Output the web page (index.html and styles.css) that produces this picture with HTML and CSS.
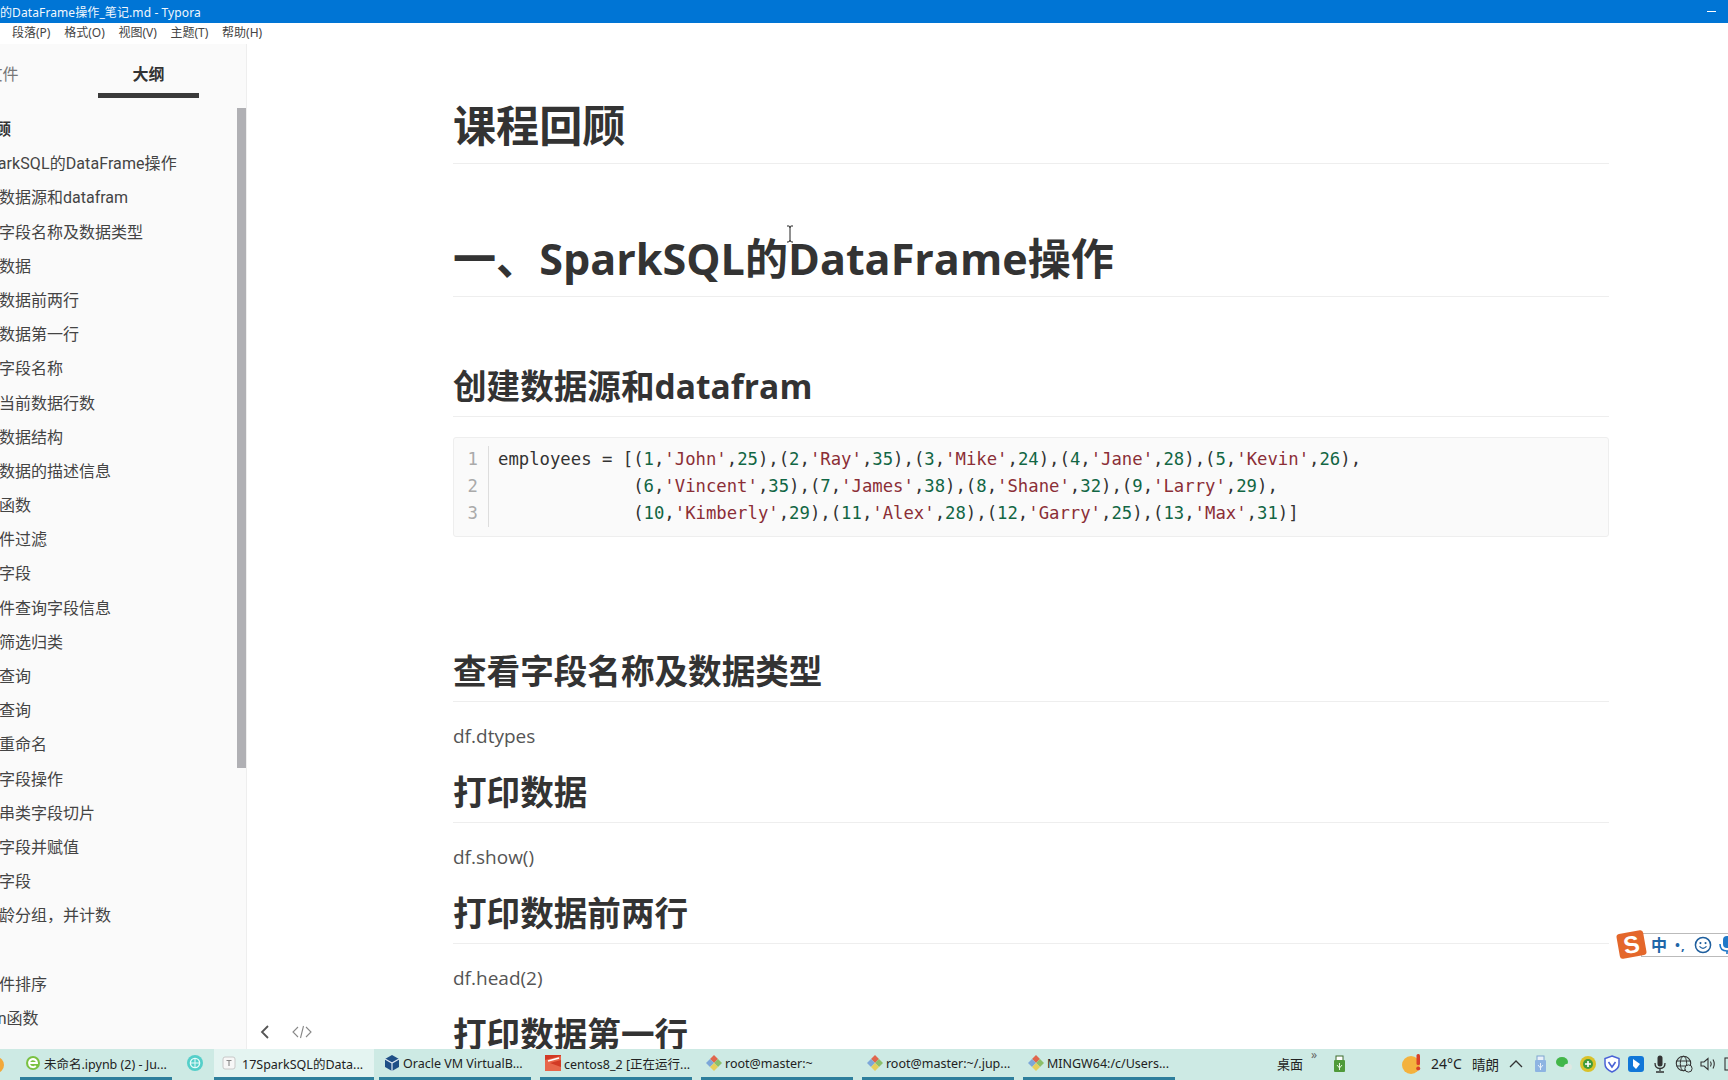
FILE: index.html
```html
<!DOCTYPE html>
<html lang="zh">
<head>
<meta charset="utf-8">
<title>Typora</title>
<link rel="stylesheet" href="styles.css">
</head>
<body>
<div class="app">
  <header class="titlebar">
    <span class="title">的DataFrame操作_笔记.md - Typora</span>
    <span class="minimize"></span>
  </header>
  <nav class="menubar">
    <span>段落(P)</span><span>格式(O)</span><span>视图(V)</span><span>主题(T)</span><span>帮助(H)</span>
  </nav>
  <div class="workspace">
    <aside class="sidebar">
      <div class="tabs">
        <span class="tab">文件</span>
        <span class="tab tab-active">大纲</span>
      </div>
      <ul class="outline">
        <li class="d1">课程回顾</li>
        <li class="d1 plain">一、SparkSQL的DataFrame操作</li>
        <li>创建数据源和datafram</li>
        <li>查看字段名称及数据类型</li>
        <li>打印数据</li>
        <li>打印数据前两行</li>
        <li>打印数据第一行</li>
        <li>查看字段名称</li>
        <li>查看当前数据行数</li>
        <li>查看数据结构</li>
        <li>查看数据的描述信息</li>
        <li>聚合函数</li>
        <li>按条件过滤</li>
        <li>选择字段</li>
        <li>按条件查询字段信息</li>
        <li>条件筛选归类</li>
        <li>模糊查询</li>
        <li>范围查询</li>
        <li>字段重命名</li>
        <li>新增字段操作</li>
        <li>字符串类字段切片</li>
        <li>新增字段并赋值</li>
        <li>删除字段</li>
        <li>按年龄分组，并计数</li>
        <li>排序</li>
        <li>按条件排序</li>
        <li>union函数</li>
      </ul>
      <div class="scrollbar"></div>
    </aside>
    <main class="doc">
      <h1 class="first">课程回顾</h1>
      <h1>一、SparkSQL的DataFrame操作</h1>
      <h2>创建数据源和datafram</h2>
      <div class="code">
        <div class="gutter"><span>1</span><span>2</span><span>3</span></div>
<pre class="lines">employees = [(<i>1</i>,<b>'John'</b>,<i>25</i>),(<i>2</i>,<b>'Ray'</b>,<i>35</i>),(<i>3</i>,<b>'Mike'</b>,<i>24</i>),(<i>4</i>,<b>'Jane'</b>,<i>28</i>),(<i>5</i>,<b>'Kevin'</b>,<i>26</i>),
             (<i>6</i>,<b>'Vincent'</b>,<i>35</i>),(<i>7</i>,<b>'James'</b>,<i>38</i>),(<i>8</i>,<b>'Shane'</b>,<i>32</i>),(<i>9</i>,<b>'Larry'</b>,<i>29</i>),
             (<i>10</i>,<b>'Kimberly'</b>,<i>29</i>),(<i>11</i>,<b>'Alex'</b>,<i>28</i>),(<i>12</i>,<b>'Garry'</b>,<i>25</i>),(<i>13</i>,<b>'Max'</b>,<i>31</i>)]</pre>
      </div>
      <h2 class="after-code">查看字段名称及数据类型</h2>
      <p>df.dtypes</p>
      <h2>打印数据</h2>
      <p>df.show()</p>
      <h2>打印数据前两行</h2>
      <p>df.head(2)</p>
      <h2>打印数据第一行</h2>
      <div class="footer-tools">
        <svg width="12" height="16" viewBox="0 0 12 16"><path d="M9 2 L3 8 L9 14" fill="none" stroke="#555" stroke-width="1.8"/></svg>
        <svg width="20" height="16" viewBox="0 0 20 16"><path d="M6 3 L1 8 L6 13 M14 3 L19 8 L14 13 M11.5 2 L8.5 14" fill="none" stroke="#888" stroke-width="1.1"/></svg>
      </div>
      <svg class="cursor" width="10" height="18" viewBox="0 0 10 18"><path d="M2 1 H4 Q5 1 5 3 V15 Q5 17 3 17 H2 M8 1 H6 Q5 1 5 3 M5 15 Q5 17 7 17 H8" fill="none" stroke="#222" stroke-width="1"/></svg>
    </main>
  </div>
  <footer class="taskbar">
    <svg class="edge-icon" width="18" height="20" viewBox="0 0 18 20"><circle cx="9" cy="10" r="8" fill="#f2a93b"/></svg>
    <div class="task t1">
      <svg width="16" height="16" viewBox="0 0 16 16"><circle cx="8" cy="8" r="7" fill="#7ac142"/><path d="M4 8 H12 A4 4 0 1 0 10.8 11" fill="none" stroke="#fff" stroke-width="2"/></svg>
      <span>未命名.ipynb (2) - Ju...</span>
    </div>
    <svg class="solo" width="18" height="18" viewBox="0 0 18 18"><circle cx="9" cy="9" r="8" fill="#54cfc9"/><circle cx="9" cy="9" r="4.6" fill="none" stroke="#e8fbfa" stroke-width="1.4"/><path d="M4.5 9 H13.5 M9 4.5 V13.5" stroke="#e8fbfa" stroke-width="1"/></svg>
    <div class="task t2 active">
      <svg width="14" height="14" viewBox="0 0 14 14"><rect x="1" y="1" width="12" height="12" rx="2" fill="#f7f7f7" stroke="#c8c8c8"/><path d="M4.5 4.5 H9.5 M7 4.5 V10" stroke="#888" stroke-width="1.1"/></svg>
      <span>17SparkSQL的Data...</span>
    </div>
    <div class="task">
      <svg width="16" height="18" viewBox="0 0 16 18"><path d="M8 1 L15 5 V13 L8 17 L1 13 V5 Z" fill="#1f4f86"/><path d="M1 5 L8 9 L15 5 M8 9 V17" stroke="#dfe9f2" stroke-width="1.2" fill="none"/></svg>
      <span>Oracle VM VirtualB...</span>
    </div>
    <div class="task">
      <svg width="16" height="16" viewBox="0 0 16 16"><rect width="16" height="16" fill="#d23a25"/><path d="M0 5 L16 1 V5 L5 8 L16 12 V16 H0 Z" fill="#e8664a"/><path d="M3 6 L14 3" stroke="#fff" stroke-width="1.4"/></svg>
      <span>centos8_2 [正在运行...</span>
    </div>
    <div class="task">
      <svg width="16" height="18" viewBox="0 0 16 18"><path d="M8 1 L12 5 L8 9 L4 5 Z" fill="#e0664d"/><path d="M4 5 L8 9 L4 13 L0 9 Z" fill="#7da7d9"/><path d="M12 5 L16 9 L12 13 L8 9 Z" fill="#8cbf6a"/><path d="M8 9 L12 13 L8 17 L4 13 Z" fill="#e6cf5c"/></svg>
      <span>root@master:~</span>
    </div>
    <div class="task">
      <svg width="16" height="18" viewBox="0 0 16 18"><path d="M8 1 L12 5 L8 9 L4 5 Z" fill="#e0664d"/><path d="M4 5 L8 9 L4 13 L0 9 Z" fill="#7da7d9"/><path d="M12 5 L16 9 L12 13 L8 9 Z" fill="#8cbf6a"/><path d="M8 9 L12 13 L8 17 L4 13 Z" fill="#e6cf5c"/></svg>
      <span>root@master:~/.jup...</span>
    </div>
    <div class="task">
      <svg width="16" height="18" viewBox="0 0 16 18"><path d="M8 1 L12 5 L8 9 L4 5 Z" fill="#e0664d"/><path d="M4 5 L8 9 L4 13 L0 9 Z" fill="#7da7d9"/><path d="M12 5 L16 9 L12 13 L8 9 Z" fill="#8cbf6a"/><path d="M8 9 L12 13 L8 17 L4 13 Z" fill="#e6cf5c"/></svg>
      <span>MINGW64:/c/Users...</span>
    </div>
    <div class="tray">
      <span class="desk">桌面</span>
      <span class="more">»</span>
      <svg class="tray-usb" width="13" height="18" viewBox="0 0 13 18"><rect x="3" y="1" width="7" height="5" fill="#fff" stroke="#3c6b2a"/><rect x="1" y="5" width="11" height="12" rx="1" fill="#4f9a3a"/><path d="M6.5 8 V15 M4 10 L6.5 13 L9 10" stroke="#e8f5e0" fill="none"/></svg>
      <svg class="weather" width="20" height="22" viewBox="0 0 20 22"><circle cx="9" cy="12" r="9" fill="#f4b23e"/><rect x="14.5" y="1" width="3.5" height="11" rx="1.5" fill="#d8402a"/><circle cx="16.2" cy="15.5" r="2" fill="#d8402a"/></svg>
      <span class="temp">24°C</span>
      <span class="sky">晴朗</span>
      <div class="icons">
        <svg width="18" height="18" viewBox="0 0 18 18"><path d="M3 12 L9 6 L15 12" fill="none" stroke="#333" stroke-width="1.3"/></svg>
        <svg width="18" height="18" viewBox="0 0 18 18"><rect x="6" y="1" width="7" height="5" fill="#e8f0fa" stroke="#7fa4d0"/><rect x="4" y="5" width="11" height="12" rx="1" fill="#8db4e2"/><path d="M9.5 8 V15 M7 10 L9.5 13 L12 10" stroke="#e8f0fa" fill="none"/></svg>
        <svg width="18" height="18" viewBox="0 0 18 18"><ellipse cx="7" cy="7" rx="6" ry="5" fill="#43b649"/><ellipse cx="13" cy="12" rx="4" ry="3.2" fill="#dfe8e2"/></svg>
        <svg width="18" height="18" viewBox="0 0 18 18"><circle cx="9" cy="9" r="8" fill="#d9c22a"/><circle cx="9" cy="9" r="5" fill="#3f9a3c"/><path d="M6 9 H12 M9 6 V12" stroke="#fff" stroke-width="1.6"/></svg>
        <svg width="18" height="18" viewBox="0 0 18 18"><path d="M9 1 L16 3.5 V9 Q16 14 9 17 Q2 14 2 9 V3.5 Z" fill="#fff" stroke="#4a63d6" stroke-width="1.5"/><path d="M5.5 7 L9 12 L12.5 7" fill="none" stroke="#4a63d6" stroke-width="1.6"/></svg>
        <svg width="18" height="18" viewBox="0 0 18 18"><rect x="1" y="1" width="16" height="16" rx="3" fill="#1177d8"/><path d="M6 4 L13 9 L9 14 L6 11 Z" fill="#fff"/></svg>
        <svg width="18" height="18" viewBox="0 0 18 18"><rect x="6.5" y="0.5" width="5" height="11" rx="2.5" fill="#333"/><path d="M4 8 Q4 13.5 9 13.5 Q14 13.5 14 8 M9 13.5 V16 M5 17 H13" fill="none" stroke="#333" stroke-width="1.3"/></svg>
        <svg width="18" height="18" viewBox="0 0 18 18"><circle cx="8.5" cy="8.5" r="7.2" fill="none" stroke="#333" stroke-width="1.1"/><ellipse cx="8.5" cy="8.5" rx="3.2" ry="7.2" fill="none" stroke="#333"/><path d="M1.5 6 H15.5 M1.5 11 H15.5" stroke="#333"/><circle cx="13.5" cy="13.5" r="3.6" fill="#cfeae5" stroke="#333"/></svg>
        <svg width="18" height="18" viewBox="0 0 18 18"><path d="M2 7 H5 L9 3.5 V14.5 L5 11 H2 Z" fill="none" stroke="#333" stroke-width="1.1"/><path d="M11.5 6.5 Q13 9 11.5 11.5 M14 4.5 Q16.5 9 14 13.5" fill="none" stroke="#333" stroke-width="1.1"/></svg>
        <svg width="18" height="18" viewBox="0 0 18 18"><rect x="2" y="3" width="14" height="12" fill="none" stroke="#333" stroke-width="1.1"/><path d="M5 7 H13 M5 11 H13" stroke="#333"/></svg>
      </div>
    </div>
  </footer>
  <div class="ime">
    <span class="ime-logo">S</span>
    <div class="ime-box">
      <span class="ime-zh">中</span>
      <span class="ime-punct">•,</span>
      <svg class="ime-smile" width="18" height="18" viewBox="0 0 19 19"><circle cx="9.5" cy="9.5" r="8" fill="none" stroke="#1f5f9e" stroke-width="1.6"/><circle cx="6.8" cy="7.5" r="1.1" fill="#1f5f9e"/><circle cx="12.2" cy="7.5" r="1.1" fill="#1f5f9e"/><path d="M5.8 11 Q9.5 15 13.2 11" fill="none" stroke="#1f5f9e" stroke-width="1.3"/></svg>
      <svg class="ime-mic" width="18" height="20" viewBox="0 0 18 20"><rect x="5" y="1" width="8" height="12" rx="4" fill="#1f78c8"/><path d="M2 9 Q2 16 9 16 Q16 16 16 9 M9 16 V19" fill="none" stroke="#1f78c8" stroke-width="1.6"/></svg>
    </div>
  </div>
</div>
</body>
</html>
```
FILE: styles.css
```css
* { box-sizing: border-box; }
html, body { margin: 0; padding: 0; height: 100%; overflow: hidden; background: #fff; }
body { font-family: "Open Sans", "Noto Sans CJK SC", sans-serif; color: #333; }
.app { position: relative; display: flex; flex-direction: column; width: 1728px; height: 1080px; overflow: hidden; }

.titlebar { flex: 0 0 23px; background: #0075d5; color: #f2f8fd; display: flex; align-items: center; justify-content: space-between; font-size: 12px; padding: 0 6px 0 0; white-space: nowrap; }
.title { font-family: "Noto Sans", "Noto Sans CJK SC", sans-serif; letter-spacing: 0.1px; }
.minimize { width: 9px; height: 1px; background: #fff; margin-right: 6px; margin-top: -1px; }

.menubar { flex: 0 0 21px; display: flex; align-items: flex-start; gap: 13.7px; padding-left: 12px; font-size: 12px; line-height: 20px; color: #444; background: #fff; font-family: "Noto Sans", "Noto Sans CJK SC", sans-serif; }

.workspace { flex: 1 1 auto; display: flex; min-height: 0; }

.sidebar { position: relative; flex: 0 0 247px; background: #fafafa; border-right: 1px solid #eee; overflow: hidden; }
.tabs { height: 54px; display: flex; margin-left: -48px; padding-left: 0; }
.tab { flex: 0 0 101px; margin-right: 45px; text-align: center; font-size: 16px; line-height: 60px; color: #777; height: 54px; white-space: nowrap; }
.tab-active { color: #333; font-weight: 700; border-bottom: 5px solid #3a3a3a; }
.outline { list-style: none; margin: 15px 0 0 -33px; padding: 0; font-family: "Roboto", "Noto Sans CJK SC", sans-serif; font-size: 16px; color: #444; }
.outline li { height: 34.2px; line-height: 34px; white-space: nowrap; }
.outline .d1 { margin-left: -20px; font-weight: 700; color: #333; }
.outline .plain { font-weight: 400; color: #444; letter-spacing: 0.08px; }
.scrollbar { position: absolute; top: 64px; right: 0; width: 9px; height: 660px; background: #b0b0b4; }

.doc { position: relative; flex: 1 1 auto; padding: 54px 119px 0 206px; background: #fff; overflow: hidden; min-width: 0; }
h1, h2 { margin: 19px 0 0; font-weight: 700; color: #333; border-bottom: 1px solid #eee; }
h1 { font-size: 43.1px; line-height: 56px; padding-bottom: 9px; margin-top: 67px; }
h1.first { margin-top: 0; }
h2 { font-size: 33.6px; line-height: 44px; padding-bottom: 8px; }
h1 + h2 { margin-top: 67px; }
h2.after-code { margin-top: 112px; }
.doc p { margin: 19px 0 0; font-size: 19px; line-height: 30px; color: #555; }

.code { display: flex; margin-top: 20px; height: 100px; padding: 8px 0 0; background: #fafafa; border: 1px solid #eee; border-radius: 3px; font-family: "DejaVu Sans Mono", monospace; font-size: 17.28px; line-height: 27px; color: #333; }
.gutter { flex: 0 0 35px; height: 81px; display: flex; flex-direction: column; text-align: right; padding-right: 10px; color: #aaa; border-right: 1px solid #ddd; }
.lines { margin: 0; padding-left: 9px; font: inherit; }
.lines i { font-style: normal; color: #116644; }
.lines b { font-weight: 400; color: #8b2e36; }

.footer-tools { position: absolute; left: 12px; bottom: 9px; display: flex; align-items: center; gap: 21px; }
.cursor { position: absolute; left: 538px; top: 181px; }

.taskbar { flex: 0 0 31px; display: flex; align-items: stretch; background: #cdeae4; font-size: 12.5px; color: #222; white-space: nowrap; font-family: "Noto Sans", "Noto Sans CJK SC", sans-serif; }
.edge-icon { align-self: center; margin-left: -13px; margin-right: 15px; flex: none; }
.solo { align-self: center; flex: none; margin: 0 10px 3px 14px; }
.task { flex: 0 0 151.7px; margin-right: 9.3px; display: flex; align-items: center; gap: 3px; padding: 0 6px 0 5px; border-bottom: 3px solid #2e7f9c; overflow: hidden; }
.task svg { flex: none; }
.task.t1 { flex-basis: 152px; margin-right: 0; }
.task.t2 { flex-basis: 160px; margin-right: 5px; padding-left: 8px; gap: 6px; }
.task.active { background: #e4f4f1; }
.tray { margin-left: 93px; display: flex; align-items: center; flex: none; padding-bottom: 2px; font-size: 13px; }
.desk { width: 34px; }
.more { width: 22px; align-self: flex-start; line-height: 12px; color: #666; font-size: 12px; }
.tray-usb { margin-right: 56px; }
.weather { margin-right: 9px; }
.temp { font-size: 14px; width: 41px; }
.sky { font-size: 13.5px; width: 35px; }
.icons { display: flex; gap: 6px; margin-left: 0; }
.icons svg { flex: none; }

.ime { position: absolute; left: 1618px; top: 932px; display: flex; align-items: center; }
.ime-logo { width: 27px; height: 25px; background: #e4672b; border-radius: 3px; transform: rotate(-10deg); color: #fff; font: 700 24px/25px "Liberation Sans", sans-serif; text-align: center; position: relative; z-index: 1; }
.ime-box { display: flex; align-items: center; height: 24px; width: 90px; margin-left: -4px; padding-left: 9px; background: #fff; border: 1px solid #bbb; border-right: 0; overflow: hidden; }
.ime-zh { color: #1f66a8; font-size: 16px; font-weight: 700; line-height: 20px; }
.ime-punct { color: #1f66a8; font-size: 13px; font-weight: 700; letter-spacing: 1px; width: 12px; margin: 0 8px 0 8px; white-space: nowrap; }
.ime-box svg { flex: none; }
.ime-mic { margin-left: 6px; }
```
